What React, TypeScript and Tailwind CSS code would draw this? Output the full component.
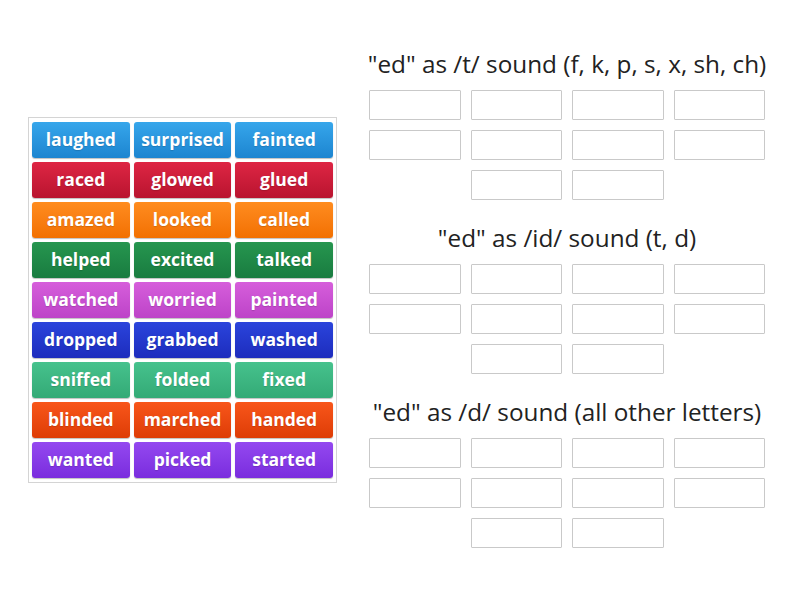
const rows = [
  { words: ["laughed", "surprised", "fainted"], cls: "from-[#36a6eb] to-[#1c85d0]" },
  { words: ["raced", "glowed", "glued"], cls: "from-[#de2544] to-[#b9142f]" },
  { words: ["amazed", "looked", "called"], cls: "from-[#ff8c1e] to-[#f27000]" },
  { words: ["helped", "excited", "talked"], cls: "from-[#26964f] to-[#197c40]" },
  { words: ["watched", "worried", "painted"], cls: "from-[#d65edb] to-[#bd43c8]" },
  { words: ["dropped", "grabbed", "washed"], cls: "from-[#2b44dc] to-[#1d2cbd]" },
  { words: ["sniffed", "folded", "fixed"], cls: "from-[#46c28d] to-[#33aa76]" },
  { words: ["blinded", "marched", "handed"], cls: "from-[#f8561a] to-[#de3c05]" },
  { words: ["wanted", "picked", "started"], cls: "from-[#9448f0] to-[#7a2cde]" },
];

const groups = [
  '"ed" as /t/ sound (f, k, p, s, x, sh, ch)',
  '"ed" as /id/ sound (t, d)',
  '"ed" as /d/ sound (all other letters)',
];

function Slots() {
  return (
    <div className="grid grid-cols-4 gap-x-[10px] gap-y-[10px] w-[396px] mx-auto">
      {Array.from({ length: 8 }).map((_, i) => (
        <div key={i} className="h-[30px] border border-[#c9c9c9] bg-white rounded-[1px]" />
      ))}
      <div />
      <div className="h-[30px] border border-[#c9c9c9] bg-white rounded-[1px]" />
      <div className="h-[30px] border border-[#c9c9c9] bg-white rounded-[1px]" />
    </div>
  );
}

export default function App() {
  return (
    <div className="w-[800px] h-[600px] bg-white flex" style={{ fontFamily: '"Open Sans", sans-serif' }}>
      <div className="pl-[28px] pt-[117px]">
        <div className="w-[309px] border border-[#d4d4d4] pt-[4px] px-[3px] pb-[4px]">
          <div className="grid grid-cols-3 gap-[4px]">
            {rows.flatMap((r) =>
              r.words.map((w) => (
                <div
                  key={w}
                  className={`h-[36px] pb-[2px] rounded-[3px] bg-linear-to-b ${r.cls} shadow-[0_1px_1px_rgba(0,0,0,0.25)] flex items-center justify-center text-white font-bold text-[17.5px] [text-shadow:0_1px_1px_rgba(0,0,0,0.15)]`}
                >
                  {w}
                </div>
              ))
            )}
          </div>
        </div>
      </div>
      <div className="w-[440px] ml-[10px] pt-[48px] flex flex-col">
        {groups.map((g, i) => (
          <div key={g} className={i > 0 ? "mt-[22px]" : ""}>
            <div className="h-[32px] leading-[32px] text-center text-[24.3px] text-[#222222] whitespace-nowrap">{g}</div>
            <div className="mt-[10px]">
              <Slots />
            </div>
          </div>
        ))}
      </div>
    </div>
  );
}
